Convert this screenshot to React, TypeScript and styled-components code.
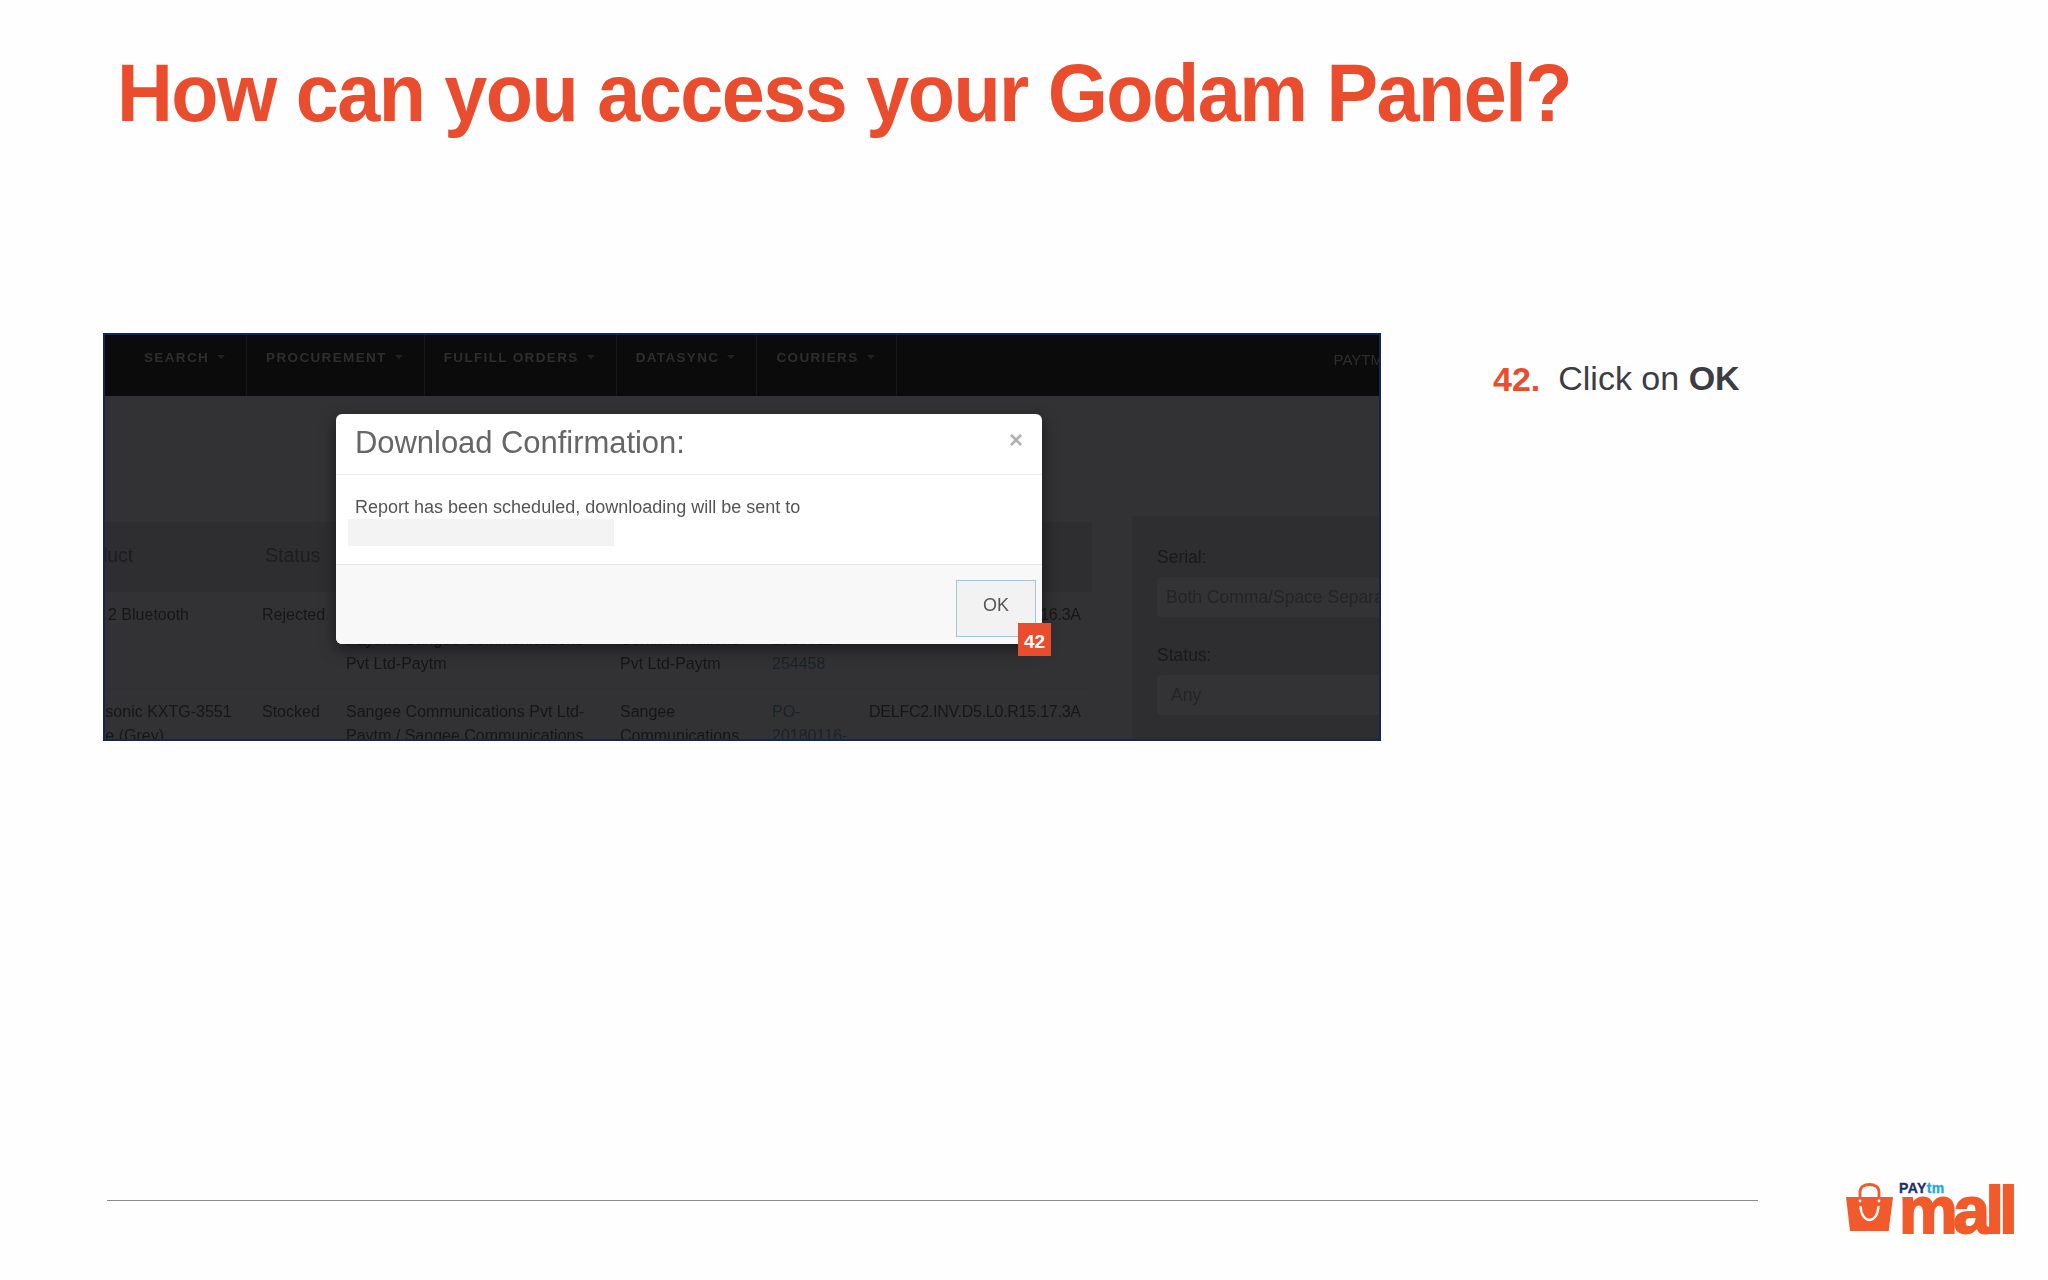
import { FC } from "react";
import styled, { createGlobalStyle } from "styled-components";

const GlobalStyle = createGlobalStyle`
  html, body {
    margin: 0;
    padding: 0;
    background: #fefefe;
    font-family: "Liberation Sans", Arial, sans-serif;
  }
`;

const navItems = ["SEARCH", "PROCUREMENT", "FULFILL ORDERS", "DATASYNC", "COURIERS"];

const App: FC = () => {
  return (
    <Page>
      <GlobalStyle />
      <Title>How can you access your Godam Panel?</Title>

      <Content>
        <Shot>
          <Nav>
            {navItems.map((item) => (
              <NavItem key={item}>
                {item}
                <Caret />
              </NavItem>
            ))}
            <NavUser>PAYTM</NavUser>
          </Nav>

          <ShotBody>
            <Table>
              <HeadRow>
                <HeadCell>Product</HeadCell>
                <HeadCell>Status</HeadCell>
              </HeadRow>
              <Row>
                <Cell>Gear 2 Bluetooth</Cell>
                <Cell>Rejected</Cell>
                <Cell>
                  Sangee Communications Pvt Ltd-Paytm / Sangee Communications Pvt Ltd-Paytm
                </Cell>
                <Cell>Sangee Communications Pvt Ltd-Paytm</Cell>
                <LinkCell>PO-20180116-254458</LinkCell>
                <CodeCell>DELFC2.INV.D5.L0.R15.16.3A</CodeCell>
              </Row>
              <Row>
                <Cell>Panasonic KXTG-3551 Phone (Grey)</Cell>
                <Cell>Stocked</Cell>
                <Cell>
                  Sangee Communications Pvt Ltd-Paytm / Sangee Communications Pvt Ltd-Paytm
                </Cell>
                <Cell>Sangee Communications Pvt Ltd-Paytm</Cell>
                <LinkCell>PO-20180116-254458</LinkCell>
                <CodeCell>DELFC2.INV.D5.L0.R15.17.3A</CodeCell>
              </Row>
            </Table>

            <Filters>
              <FilterLabel>Serial:</FilterLabel>
              <FilterInput>Both Comma/Space Separated</FilterInput>
              <FilterLabel>Status:</FilterLabel>
              <FilterInput $indent>Any</FilterInput>
            </Filters>
          </ShotBody>

          <Modal>
            <ModalHeader>
              <ModalTitle>Download Confirmation:</ModalTitle>
              <ModalClose>×</ModalClose>
            </ModalHeader>
            <ModalBody>
              <p>Report has been scheduled, downloading will be sent to</p>
              <Redacted />
            </ModalBody>
            <ModalFooter>
              <OkButton>OK</OkButton>
            </ModalFooter>
            <StepBadge>42</StepBadge>
          </Modal>
        </Shot>

        <Step>
          <StepNumber>42.</StepNumber>
          <StepText>
            Click on <strong>OK</strong>
          </StepText>
        </Step>
      </Content>

      <Footer>
        <FooterRule />
        <Logo>
          <svg width="47" height="48" viewBox="0 0 47 48">
            <path d="M14 16V9C14 4 18 1.5 23.5 1.5S33 4 33 9v7" fill="none" stroke="#f15a2b" strokeWidth="2.8" />
            <path d="M0 14H47L42.7 48H4Z" fill="#f15a2b" />
            <circle cx="14" cy="18" r="1.4" fill="#fff" />
            <circle cx="33" cy="18" r="1.4" fill="#fff" />
            <path d="M14.5 23C15 32 19 37 23.5 37S32 32 32.5 23" fill="none" stroke="#fff" strokeWidth="2.4" />
          </svg>
          <LogoWords>
            <LogoPaytm>
              PAY<span>tm</span>
            </LogoPaytm>
            <LogoMall>mall</LogoMall>
          </LogoWords>
        </Logo>
      </Footer>
    </Page>
  );
};

const Page = styled.div`
  width: 2048px;
  height: 1280px;
  display: flex;
  flex-direction: column;
  overflow: hidden;
  background: #fefefe;
`;

const Title = styled.h1`
  margin: 45px 0 1px 117px;
  font-size: 81px;
  line-height: 96px;
  font-weight: 700;
  letter-spacing: -1.6px;
  color: #ea4c2e;
  white-space: nowrap;
  transform: scaleX(0.955);
  transform-origin: left center;
`;

const Content = styled.div`
  margin: 191px 0 0 103px;
  display: flex;
  align-items: flex-start;
`;

const Shot = styled.div`
  position: relative;
  box-sizing: border-box;
  width: 1278px;
  height: 408px;
  border: 2px solid #14245a;
  background: #323234;
  overflow: hidden;
`;

const Nav = styled.div`
  height: 61px;
  display: flex;
  background: #0b0b0b;
  padding-left: 20px;
  position: relative;
`;

const NavItem = styled.div`
  display: flex;
  align-items: center;
  gap: 8px;
  padding: 0 21px 17px 19px;
  border-right: 1px solid #181818;
  font-size: 13.5px;
  font-weight: 700;
  letter-spacing: 1.35px;
  color: #2e2e2e;
  filter: blur(0.6px);
`;

const Caret = styled.span`
  width: 0;
  height: 0;
  border-left: 4px solid transparent;
  border-right: 4px solid transparent;
  border-top: 4px solid #222222;
`;

const NavUser = styled.div`
  margin-left: auto;
  margin-right: -4px;
  align-self: center;
  padding-bottom: 13px;
  font-size: 15px;
  color: #2e2e2e;
  filter: blur(0.6px);
`;

const ShotBody = styled.div`
  display: flex;
  align-items: flex-start;
`;

const Table = styled.div`
  flex: none;
  width: 1032px;
  margin: 126px 0 0 -45px;
  filter: blur(0.6px);
`;

const gridColumns = "194px 84px 274px 152px 97px 222px";

const HeadRow = styled.div`
  display: grid;
  grid-template-columns: ${gridColumns};
  height: 70px;
  align-items: center;
  background: #2e2e30;
`;

const HeadCell = styled.div`
  padding: 0 9px 4px 11px;
  font-size: 19.5px;
  color: #1d1d1d;
  &:first-child {
    padding-left: 6px;
  }
`;

const Row = styled.div`
  display: grid;
  grid-template-columns: ${gridColumns};
  padding: 5px 0 11px;
  border-bottom: 1px solid #303032;
`;

const Cell = styled.div`
  padding: 6px 8px 0 8px;
  font-size: 16px;
  line-height: 24.5px;
  color: #161616;
  overflow: hidden;
`;

const LinkCell = styled(Cell)`
  color: #1a2424;
`;

const CodeCell = styled(Cell)`
  letter-spacing: -0.25px;
`;

const Filters = styled.div`
  flex: none;
  width: 251px;
  height: 260px;
  margin: 120px 0 0 40px;
  padding: 30px 0 0 25px;
  box-sizing: border-box;
  background: #2e2e30;
  filter: blur(0.6px);
  white-space: nowrap;
`;

const FilterLabel = styled.div`
  font-size: 17.5px;
  line-height: 22px;
  color: #191919;
`;

const FilterInput = styled.div<{ $indent?: boolean }>`
  box-sizing: border-box;
  width: 260px;
  height: 40px;
  margin: 9px 0 27px;
  padding-left: ${({ $indent }) => ($indent ? "14px" : "9px")};
  background: #333335;
  border-radius: 4px;
  font-size: 17.5px;
  line-height: 40px;
  color: #242424;
`;

const Modal = styled.div`
  position: absolute;
  left: 231px;
  top: 79px;
  width: 706px;
  height: 230px;
  display: flex;
  flex-direction: column;
  background: #fff;
  border-radius: 6px;
  box-shadow: 0 5px 15px rgba(0, 0, 0, 0.5);
`;

const ModalHeader = styled.div`
  flex: none;
  height: 60px;
  display: flex;
  align-items: center;
  justify-content: space-between;
  padding: 0 19px;
  border-bottom: 1px solid #eeeeee;
`;

const ModalTitle = styled.div`
  font-size: 31px;
  letter-spacing: -0.05px;
  color: #666666;
  margin-top: -2px;
`;

const ModalClose = styled.div`
  font-size: 24px;
  font-weight: 700;
  color: #b0b0b0;
  margin: -8px 0 0 0;
`;

const ModalBody = styled.div`
  flex: 1;
  padding: 20px 19px 0;
  font-size: 18px;
  color: #555555;
  p {
    margin: 0;
    line-height: 24px;
  }
`;

const Redacted = styled.div`
  width: 266px;
  height: 27px;
  margin: 0 0 0 -7px;
  background: #f3f3f3;
`;

const ModalFooter = styled.div`
  flex: none;
  height: 80px;
  box-sizing: border-box;
  display: flex;
  justify-content: flex-end;
  padding: 15px 6px 0 0;
  background: #f8f8f8;
  border-top: 1px solid #e3e3e8;
  border-radius: 0 0 6px 6px;
`;

const OkButton = styled.div`
  box-sizing: border-box;
  width: 80px;
  height: 57px;
  display: flex;
  align-items: center;
  justify-content: center;
  padding-bottom: 7px;
  border: 1px solid #a8c4d8;
  background: #f2f2f2;
  font-size: 18px;
  color: #555555;
`;

const StepBadge = styled.div`
  position: absolute;
  right: -9px;
  bottom: -12px;
  width: 33px;
  height: 33px;
  box-sizing: border-box;
  padding-top: 5px;
  display: flex;
  align-items: center;
  justify-content: center;
  background: #ea4c2e;
  color: #fff;
  font-size: 19px;
  font-weight: 700;
`;

const Step = styled.div`
  margin: 21px 0 0 112px;
  display: flex;
  align-items: baseline;
  gap: 18px;
  font-size: 34px;
  line-height: 48px;
`;

const StepNumber = styled.span`
  font-weight: 700;
  color: #ea4c2e;
  transform: translateY(1px);
`;

const StepText = styled.span`
  color: #3c3c44;
`;

const Footer = styled.div`
  margin-top: auto;
  height: 80px;
  padding-left: 107px;
  display: flex;
  align-items: flex-start;
`;

const FooterRule = styled.div`
  width: 1651px;
  height: 1px;
  background: #8c8c8c;
`;

const Logo = styled.div`
  margin: -17px 0 0 88px;
  display: flex;
  align-items: flex-start;
  gap: 6px;
`;

const LogoWords = styled.div`
  display: flex;
  flex-direction: column;
`;

const LogoPaytm = styled.div`
  font-size: 14px;
  line-height: 11px;
  height: 11px;
  font-weight: 700;
  letter-spacing: 0.4px;
  color: #1c2f6b;
  -webkit-text-stroke: 0.3px #1c2f6b;
  span {
    color: #22a6e0;
    -webkit-text-stroke: 0.3px #22a6e0;
  }
`;

const LogoMall = styled.div`
  margin-top: -9px;
  font-size: 66px;
  line-height: 50px;
  height: 50px;
  font-weight: 700;
  letter-spacing: -4.5px;
  color: #f15a2b;
  -webkit-text-stroke: 2px #f15a2b;
`;

export default App;
